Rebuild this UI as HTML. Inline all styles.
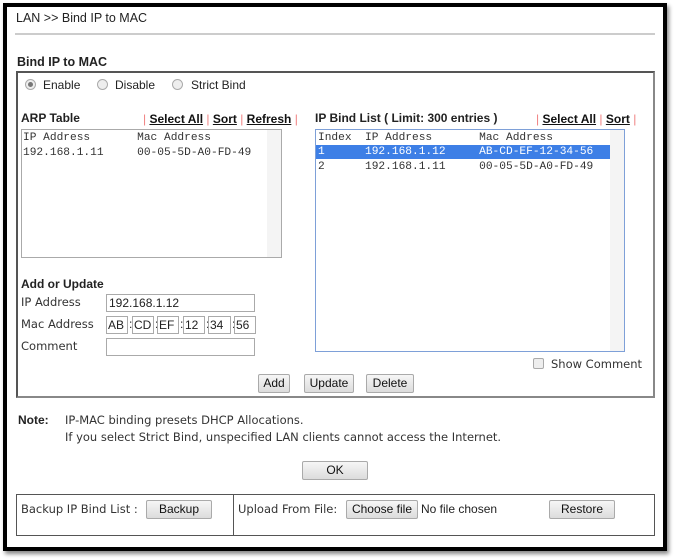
<!DOCTYPE html>
<html><head><meta charset="utf-8"><style>
*{box-sizing:border-box;margin:0;padding:0}
body{width:674px;height:559px;background:#fff;position:relative;overflow:hidden;font-family:"Liberation Sans",Arial,sans-serif;font-size:12px;color:#222}
.a{position:absolute;white-space:nowrap}
.frame{position:absolute;left:3px;top:3px;width:664px;height:548px;border:4px solid #000;box-shadow:2px 3px 4px #888}
.mono{font-family:"Liberation Mono",monospace;font-size:11.2px;color:#333}
.v{font-family:"DejaVu Sans",sans-serif;font-size:11.5px;color:#333}
.b{font-weight:bold}
.lnk{font-weight:bold;text-decoration:underline;color:#111}
.pipe{color:#f08080}
.box{position:absolute;border:1px solid #aaa;background:#fff}
.btn{position:absolute;border:1px solid #aaa;border-radius:2px;background:linear-gradient(#f6f6f6,#dcdcdc);font-size:12px;text-align:center;line-height:17px;color:#111}
.radio{position:absolute;width:11px;height:11px;border-radius:50%;border:1px solid #aaa;background:#eee}
.sb{position:absolute;right:0;top:0;bottom:0;width:14px;background:#f4f4f4}
</style></head><body>
<div class="frame"></div>
<div class="a" style="left:16px;top:11px;font-size:12.5px">LAN &gt;&gt; Bind IP to MAC</div>
<div class="a" style="left:15px;top:33px;width:640px;height:2px;background:#ccc"></div>
<div class="a b" style="left:17px;top:55px;font-size:12.5px">Bind IP to MAC</div>
<div class="a" style="left:16px;top:71px;width:639px;height:327px;border:2px solid #666;border-color:#555 #888 #888 #555"></div>
<div class="radio" style="left:25px;top:79px"><div style="position:absolute;left:2px;top:2px;width:5px;height:5px;border-radius:50%;background:#777"></div></div>
<div class="a" style="left:43px;top:78px">Enable</div>
<div class="radio" style="left:97px;top:79px"></div>
<div class="a" style="left:115px;top:78px">Disable</div>
<div class="radio" style="left:172px;top:79px"></div>
<div class="a" style="left:191px;top:78px">Strict Bind</div>

<div class="a b" style="left:21px;top:111px">ARP Table</div>
<div class="a" style="left:143px;top:112px"><span class="pipe">|</span> <span class="lnk">Select All</span> <span class="pipe">|</span> <span class="lnk">Sort</span> <span class="pipe">|</span> <span class="lnk">Refresh</span> <span class="pipe">|</span></div>
<div class="box" style="left:21px;top:129px;width:261px;height:129px"><div class="sb"></div>
<div class="a mono" style="left:1px;top:2px">IP Address&nbsp;&nbsp;&nbsp;&nbsp;&nbsp;&nbsp;&nbsp;Mac Address</div>
<div class="a mono" style="left:1px;top:17px">192.168.1.11&nbsp;&nbsp;&nbsp;&nbsp;&nbsp;00-05-5D-A0-FD-49</div></div>

<div class="a b" style="left:315px;top:111px">IP Bind List ( Limit: 300 entries )</div>
<div class="a" style="left:536px;top:112px"><span class="pipe">|</span> <span class="lnk">Select All</span> <span class="pipe">|</span> <span class="lnk">Sort</span> <span class="pipe">|</span></div>
<div class="box" style="left:315px;top:129px;width:310px;height:223px;border-color:#7ea0d8"><div class="sb"></div>
<div class="a mono" style="left:2px;top:2px">Index&nbsp;&nbsp;IP Address&nbsp;&nbsp;&nbsp;&nbsp;&nbsp;&nbsp;&nbsp;Mac Address</div>
<div class="a" style="left:0;top:15px;width:294px;height:14px;background:#3d7fe6"></div>
<div class="a mono" style="left:2px;top:16px;color:#fff">1&nbsp;&nbsp;&nbsp;&nbsp;&nbsp;&nbsp;192.168.1.12&nbsp;&nbsp;&nbsp;&nbsp;&nbsp;AB-CD-EF-12-34-56</div>
<div class="a mono" style="left:2px;top:31px">2&nbsp;&nbsp;&nbsp;&nbsp;&nbsp;&nbsp;192.168.1.11&nbsp;&nbsp;&nbsp;&nbsp;&nbsp;00-05-5D-A0-FD-49</div></div>

<div class="a b" style="left:21px;top:277px">Add or Update</div>
<div class="a v" style="left:21px;top:295px">IP Address</div>
<div class="box" style="left:106px;top:294px;width:149px;height:18px;padding-left:2px;line-height:16px">192.168.1.12</div>
<div class="a v" style="left:21px;top:317px">Mac Address</div>
<div class="box" style="left:106px;top:316px;width:22px;height:18px;padding-left:1px;line-height:16px">AB</div>
<div class="a" style="left:129px;top:317px">:</div>
<div class="box" style="left:132px;top:316px;width:22px;height:18px;padding-left:1px;line-height:16px">CD</div>
<div class="a" style="left:155px;top:317px">:</div>
<div class="box" style="left:157px;top:316px;width:22px;height:18px;padding-left:1px;line-height:16px">EF</div>
<div class="a" style="left:180px;top:317px">:</div>
<div class="box" style="left:183px;top:316px;width:22px;height:18px;padding-left:1px;line-height:16px">12</div>
<div class="a" style="left:206px;top:317px">:</div>
<div class="box" style="left:208px;top:316px;width:23px;height:18px;padding-left:1px;line-height:16px">34</div>
<div class="a" style="left:232px;top:317px">:</div>
<div class="box" style="left:234px;top:316px;width:22px;height:18px;padding-left:1px;line-height:16px">56</div>
<div class="a v" style="left:21px;top:339px">Comment</div>
<div class="box" style="left:106px;top:338px;width:149px;height:18px"></div>

<div class="a" style="left:533px;top:358px;width:11px;height:11px;border:1px solid #aaa;border-radius:2px;background:#eee"></div>
<div class="a v" style="left:551px;top:357px">Show Comment</div>

<div class="btn" style="left:258px;top:374px;width:32px;height:19px">Add</div>
<div class="btn" style="left:304px;top:374px;width:50px;height:19px">Update</div>
<div class="btn" style="left:366px;top:374px;width:48px;height:19px">Delete</div>

<div class="a b" style="left:18px;top:413px">Note:</div>
<div class="a v" style="left:65px;top:413px">IP-MAC binding presets DHCP Allocations.</div>
<div class="a v" style="left:65px;top:430px">If you select Strict Bind, unspecified LAN clients cannot access the Internet.</div>
<div class="btn" style="left:302px;top:461px;width:66px;height:19px">OK</div>

<div class="a" style="left:16px;top:494px;width:639px;height:42px;border:1px solid #555"></div>
<div class="a" style="left:233px;top:494px;width:1px;height:42px;background:#555"></div>
<div class="a v" style="left:21px;top:502px">Backup IP Bind List :</div>
<div class="btn" style="left:146px;top:500px;width:66px;height:19px">Backup</div>
<div class="a v" style="left:238px;top:502px">Upload From File:</div>
<div class="btn" style="left:346px;top:500px;width:72px;height:19px">Choose file</div>
<div class="a" style="left:421px;top:502px">No file chosen</div>
<div class="btn" style="left:549px;top:500px;width:66px;height:19px">Restore</div>
</body></html>
